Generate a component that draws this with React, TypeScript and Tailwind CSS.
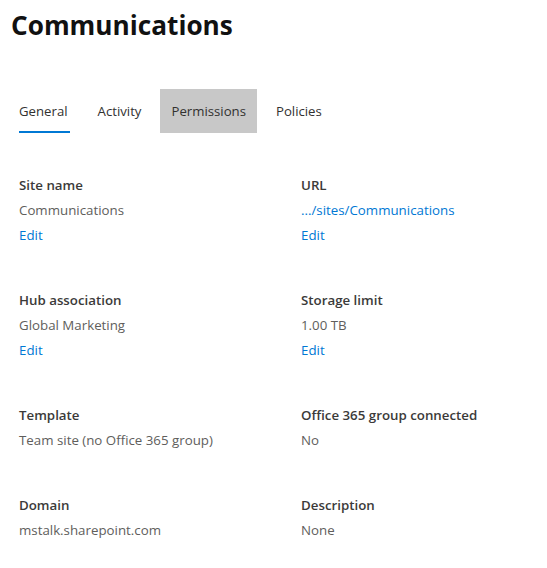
import React from "react";

type Item = { label: string; value: string; link?: boolean; edit?: boolean };

const rows: [Item, Item][] = [
  [
    { label: "Site name", value: "Communications", edit: true },
    { label: "URL", value: ".../sites/Communications", link: true, edit: true },
  ],
  [
    { label: "Hub association", value: "Global Marketing", edit: true },
    { label: "Storage limit", value: "1.00 TB", edit: true },
  ],
  [
    { label: "Template", value: "Team site (no Office 365 group)" },
    { label: "Office 365 group connected", value: "No" },
  ],
  [
    { label: "Domain", value: "mstalk.sharepoint.com" },
    { label: "Description", value: "None" },
  ],
];

function Field({ item }: { item: Item }) {
  return (
    <div className="flex flex-col">
      <div className="h-[25px] leading-[25px] font-semibold text-[#3b3a39]">{item.label}</div>
      <div className={"h-[25px] leading-[25px] " + (item.link ? "text-[#0078d4]" : "text-[#605e5c]")}>
        {item.value}
      </div>
      {item.edit && <div className="h-[25px] leading-[25px] text-[#0078d4]">Edit</div>}
    </div>
  );
}

export default function App() {
  const tabs = ["General", "Activity", "Permissions", "Policies"];
  return (
    <div className="w-[547px] h-[568px] bg-white overflow-hidden text-[13.3px]" style={{ fontFamily: '"Open Sans", sans-serif' }}>
      <h1 className="pl-[11px] pt-[5px] text-[26.2px] leading-[40px] font-bold text-[#111]">Communications</h1>
      <div className="mt-[44px] flex gap-[8px] pl-[8px]">
        {tabs.map((t, i) => (
          <div
            key={t}
            className={
              "relative h-[44px] px-[11px] pt-[2px] flex items-center text-[13.2px] text-[#323130] " +
              (t === "Permissions" ? "bg-[#c8c8c8]" : "")
            }
          >
            {t}
            {i === 0 && <div className="absolute left-[11px] right-[9px] bottom-0 h-[2px] bg-[#0078d4]" />}
          </div>
        ))}
      </div>
      <div className="mt-[40px] pl-[19px] flex flex-col gap-[40px]">
        {rows.map((r, i) => (
          <div key={i} className="grid grid-cols-[282px_1fr]">
            <Field item={r[0]} />
            <Field item={r[1]} />
          </div>
        ))}
      </div>
    </div>
  );
}
